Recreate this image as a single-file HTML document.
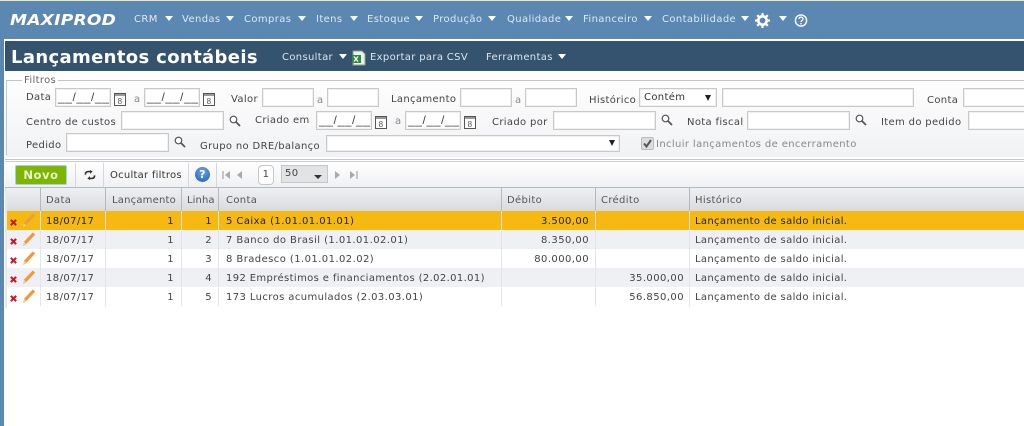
<!DOCTYPE html>
<html lang="pt"><head><meta charset="utf-8"><title>Lançamentos contábeis</title>
<style>
html,body{margin:0;padding:0;width:1024px;height:426px;overflow:hidden;background:#5b87b3}
body{position:relative;font-family:"DejaVu Sans","Liberation Sans",sans-serif;font-size:10px;color:#444;letter-spacing:.34px}
.a,.t,.i,.c,.mi,.d{position:absolute}
.t{white-space:nowrap;line-height:12px}
.mi{top:14px;color:#dfe8f1;white-space:nowrap;line-height:12px;font-size:10px;letter-spacing:.38px}
.d{width:0;height:0;border-left:4px solid transparent;border-right:4px solid transparent;border-top:5px solid #fff}
.i{box-sizing:border-box;height:19px;background:#fff;border:1px solid #c9c9c9;box-shadow:inset 0 0 0 1px #f0f0f0}
.date{font-family:"Liberation Sans",sans-serif;font-size:12px;color:#444;line-height:16px;padding-left:2px;letter-spacing:.6px;white-space:nowrap;width:56px}
.c{width:12px;height:14px}
.row{position:absolute;left:7px;width:1017px;height:19px}
.cell{position:absolute;top:1px;height:19px;line-height:19px;white-space:nowrap;color:#444}
.n{letter-spacing:.43px}
.h{position:absolute;top:193px;line-height:16px;color:#555}
.hs{position:absolute;top:188px;height:23px;width:1px;background:#b3b9c3}
.rs{position:absolute;top:211px;width:1px;height:95px;background:#e3e5e8}
</style></head><body>
<div class="a" style="left:0;top:0;width:1024px;height:1px;background:#f0e7b8"></div>
<div class="t" style="left:10px;top:11px;font:italic bold 15px/18px 'DejaVu Sans',sans-serif;color:#fff;letter-spacing:.2px;transform:scaleX(1.14);transform-origin:left">MAXIPROD</div>
<span class="mi" style="left:134px">CRM</span><i class="d" style="left:165px;top:16px"></i>
<span class="mi" style="left:182px">Vendas</span><i class="d" style="left:226px;top:16px"></i>
<span class="mi" style="left:244px">Compras</span><i class="d" style="left:298px;top:16px"></i>
<span class="mi" style="left:316px">Itens</span><i class="d" style="left:350px;top:16px"></i>
<span class="mi" style="left:367px">Estoque</span><i class="d" style="left:415px;top:16px"></i>
<span class="mi" style="left:433px">Produção</span><i class="d" style="left:488px;top:16px"></i>
<span class="mi" style="left:507px">Qualidade</span><i class="d" style="left:565px;top:16px"></i>
<span class="mi" style="left:583px">Financeiro</span><i class="d" style="left:644px;top:16px"></i>
<span class="mi" style="left:662px">Contabilidade</span><i class="d" style="left:741px;top:16px"></i>
<svg class="a" style="left:755px;top:13px" width="15" height="15" viewBox="0 0 15 15"><circle cx="7.5" cy="7.5" r="4.2" fill="none" stroke="#fff" stroke-width="2.6"/><path d="M7.5 0v3M7.5 12v3M0 7.5h3M12 7.5h3M2.2 2.2l2 2M10.8 10.8l2 2M12.8 2.2l-2 2M4.2 10.8l-2 2" stroke="#fff" stroke-width="2.2"/></svg>
<i class="d" style="left:779px;top:16px"></i>
<svg class="a" style="left:794px;top:13px" width="14" height="15" viewBox="0 0 14 15"><circle cx="7" cy="7.5" r="5.6" fill="none" stroke="#fff" stroke-width="1.4"/><path d="M5 6c0-2.5 4-2.5 4 0 0 1.500-2 1.500-2 3" fill="none" stroke="#fff" stroke-width="1.300"/><rect x="6.300" y="10" width="1.400" height="1.400" fill="#fff"/></svg>

<div class="a" style="left:4px;top:39px;width:1020px;height:387px;background:#fff"></div>
<div class="a" style="left:5px;top:41px;width:1019px;height:30px;background:#34536f"></div>
<div class="t" style="left:11px;top:48px;font:bold 18px/20px 'DejaVu Sans',sans-serif;color:#fff;letter-spacing:.35px">Lançamentos contábeis</div>
<span class="t" style="left:282px;top:52px;color:#dde5ec">Consultar</span><i class="d" style="left:339px;top:54px"></i>
<svg class="a" style="left:351px;top:50px" width="16" height="16" viewBox="0 0 16 16"><path d="M2 1h9l3 3v11H2z" fill="#eef2ee" stroke="#8d9a93"/><rect x="1" y="5" width="9" height="8" fill="#2f8a3c"/><path d="M3 6.500l4 5M7 6.500l-4 5" stroke="#fff" stroke-width="1.300"/></svg>
<span class="t" style="left:370px;top:52px;color:#dde5ec">Exportar para CSV</span>
<span class="t" style="left:486px;top:52px;color:#dde5ec">Ferramentas</span><i class="d" style="left:558px;top:54px"></i>

<div class="a" style="left:5px;top:71px;width:1019px;height:86px;background:linear-gradient(#fff,#f1f2f4)"></div>
<div class="a" style="left:6px;top:80px;width:1018px;height:75px;box-sizing:border-box;border:1px solid #c3c6cb;border-right:0;border-bottom:0"></div>
<div class="t" style="left:22px;top:75px;padding:0 2px;background:#fff;color:#666">Filtros</div>

<span class="t" style="left:26px;top:92px">Data</span>
<div class="i date" style="left:55px;top:88px">__/__/__</div>
<svg class="c" style="left:114px;top:92px" viewBox="0 0 12 14"><rect x=".5" y="1.500" width="11" height="12" fill="#fff" stroke="#555"/><rect x="1" y="2" width="10" height="2" fill="#999"/><text x="6" y="12" font-size="8" text-anchor="middle" fill="#555" font-family="Liberation Sans">8</text></svg>
<span class="t" style="left:134px;top:94px;color:#888">a</span>
<div class="i date" style="left:144px;top:88px">__/__/__</div>
<svg class="c" style="left:203px;top:92px" viewBox="0 0 12 14"><rect x=".5" y="1.500" width="11" height="12" fill="#fff" stroke="#555"/><rect x="1" y="2" width="10" height="2" fill="#999"/><text x="6" y="12" font-size="8" text-anchor="middle" fill="#555" font-family="Liberation Sans">8</text></svg>
<span class="t" style="left:231px;top:94px">Valor</span>
<div class="i" style="left:262px;top:88px;width:52px"></div>
<span class="t" style="left:317px;top:95px;color:#888">a</span>
<div class="i" style="left:327px;top:88px;width:52px"></div>
<span class="t" style="left:391px;top:94px">Lançamento</span>
<div class="i" style="left:460px;top:88px;width:52px"></div>
<span class="t" style="left:515px;top:95px;color:#888">a</span>
<div class="i" style="left:525px;top:88px;width:52px"></div>
<span class="t" style="left:589px;top:95px">Histórico</span>
<div class="i" style="left:639px;top:88px;width:78px;color:#333;line-height:17px;padding-left:4px;font-size:10px">Contém</div>
<div class="a" style="left:705px;top:95px;width:0;height:0;border-left:3.500px solid transparent;border-right:3.500px solid transparent;border-top:6px solid #222"></div>
<div class="i" style="left:722px;top:88px;width:192px"></div>
<span class="t" style="left:927px;top:95px">Conta</span>
<div class="i" style="left:963px;top:88px;width:70px"></div>

<span class="t" style="left:26px;top:117px">Centro de custos</span>
<div class="i" style="left:121px;top:111px;width:103px"></div>
<svg class="a" style="left:229px;top:115px" width="12" height="12" viewBox="0 0 12 12"><circle cx="4.500" cy="4.500" r="3.300" fill="#fff" stroke="#555" stroke-width="1.200"/><path d="M7 7l4 4" stroke="#555" stroke-width="1.800"/></svg>
<span class="t" style="left:255px;top:115px">Criado em</span>
<div class="i date" style="left:316px;top:111px">__/__/__</div>
<svg class="c" style="left:375px;top:115px" viewBox="0 0 12 14"><rect x=".5" y="1.500" width="11" height="12" fill="#fff" stroke="#555"/><rect x="1" y="2" width="10" height="2" fill="#999"/><text x="6" y="12" font-size="8" text-anchor="middle" fill="#555" font-family="Liberation Sans">8</text></svg>
<span class="t" style="left:395px;top:116px;color:#888">a</span>
<div class="i date" style="left:405px;top:111px">__/__/__</div>
<svg class="c" style="left:464px;top:115px" viewBox="0 0 12 14"><rect x=".5" y="1.500" width="11" height="12" fill="#fff" stroke="#555"/><rect x="1" y="2" width="10" height="2" fill="#999"/><text x="6" y="12" font-size="8" text-anchor="middle" fill="#555" font-family="Liberation Sans">8</text></svg>
<span class="t" style="left:492px;top:117px">Criado por</span>
<div class="i" style="left:553px;top:111px;width:103px"></div>
<svg class="a" style="left:661px;top:114px" width="12" height="12" viewBox="0 0 12 12"><circle cx="4.500" cy="4.500" r="3.300" fill="#fff" stroke="#555" stroke-width="1.200"/><path d="M7 7l4 4" stroke="#555" stroke-width="1.800"/></svg>
<span class="t" style="left:687px;top:117px">Nota fiscal</span>
<div class="i" style="left:747px;top:111px;width:103px"></div>
<svg class="a" style="left:855px;top:114px" width="12" height="12" viewBox="0 0 12 12"><circle cx="4.500" cy="4.500" r="3.300" fill="#fff" stroke="#555" stroke-width="1.200"/><path d="M7 7l4 4" stroke="#555" stroke-width="1.800"/></svg>
<span class="t" style="left:881px;top:117px">Item do pedido</span>
<div class="i" style="left:968px;top:111px;width:70px"></div>

<span class="t" style="left:26px;top:140px">Pedido</span>
<div class="i" style="left:66px;top:133px;width:103px"></div>
<svg class="a" style="left:174px;top:136px" width="12" height="12" viewBox="0 0 12 12"><circle cx="4.500" cy="4.500" r="3.300" fill="#fff" stroke="#555" stroke-width="1.200"/><path d="M7 7l4 4" stroke="#555" stroke-width="1.800"/></svg>
<span class="t" style="left:200px;top:141px">Grupo no DRE/balanço</span>
<div class="i" style="left:326px;top:135px;width:294px;height:17px"></div>
<div class="a" style="left:609px;top:140px;width:0;height:0;border-left:3.500px solid transparent;border-right:3.500px solid transparent;border-top:6px solid #222"></div>
<div class="a" style="left:641px;top:137px;width:11px;height:11px;background:#ddd;border:1px solid #bbb;border-radius:2px"></div>
<svg class="a" style="left:642px;top:138px" width="11" height="11" viewBox="0 0 11 11"><path d="M2 5.500l2.500 3L9 2" fill="none" stroke="#555" stroke-width="2"/></svg>
<span class="t" style="left:656px;top:139px;color:#888;letter-spacing:.37px">Incluir lançamentos de encerramento</span>

<div class="a" style="left:5px;top:159px;width:1019px;height:1px;background:#c3c6cb"></div>
<div class="a" style="left:5px;top:160px;width:1019px;height:2px;background:#fff"></div>
<div class="a" style="left:5px;top:162px;width:1019px;height:26px;background:linear-gradient(#fff,#eff0f2)"></div>
<div class="a" style="left:5px;top:161px;width:1019px;height:1px;background:#c9ccd2"></div>
<div class="a" style="left:15px;top:165px;width:52px;height:20px;box-sizing:border-box;background:#7db500;border:1px solid #a8cfe8;border-radius:2px;color:#eaf5cf;text-align:center;font:bold 11.5px/18px 'DejaVu Sans',sans-serif;letter-spacing:.6px">Novo</div>
<div class="a" style="left:75px;top:163px;width:1px;height:24px;background:#d5d7db"></div>
<svg class="a" style="left:83px;top:170px" width="14" height="10" viewBox="0 0 14 13"><path d="M1 6C1 3 3 2 5 2h3M13 7c0 3-2 4-4 4H6" fill="none" stroke="#333" stroke-width="2.200"/><path d="M7 0l3.500 2L7 5zM7 13l-3.500-2L7 8z" fill="#333"/></svg>
<div class="a" style="left:103px;top:163px;width:1px;height:24px;background:#d5d7db"></div>
<span class="t" style="left:110px;top:170px;color:#333;letter-spacing:.25px">Ocultar filtros</span>
<div class="a" style="left:188px;top:163px;width:1px;height:24px;background:#d5d7db"></div>
<div class="a" style="left:195px;top:167px;width:15px;height:15px;border-radius:50%;background:radial-gradient(circle at 50% 30%,#6aa3ea,#1e5fb5);color:#fff;text-align:center;font:bold 11px/15px 'DejaVu Sans',sans-serif">?</div>
<div class="a" style="left:216px;top:163px;width:1px;height:24px;background:#d5d7db"></div>
<svg class="a" style="left:222px;top:170px" width="30" height="10" viewBox="0 0 30 10"><path d="M1 1v8" stroke="#aaa" stroke-width="1.300"/><path d="M8 1v8L3 5zM20 1v8l-5-4z" fill="#aaa"/></svg>
<div class="a" style="left:258px;top:165px;width:16px;height:20px;box-sizing:border-box;background:#fff;border:1px solid #c6c6c6;border-radius:4px;text-align:center;line-height:18px;color:#444">1</div>
<div class="a" style="left:281px;top:165px;width:47px;height:18px;box-sizing:border-box;background:#e2e3e5;border:1px solid #c6c6c6;line-height:16px;padding-left:3px;color:#444">50</div>
<div class="a" style="left:314px;top:175px;width:0;height:0;border-left:4.500px solid transparent;border-right:4.500px solid transparent;border-top:4px solid #333"></div>
<svg class="a" style="left:334px;top:170px" width="26" height="10" viewBox="0 0 26 10"><path d="M1 1v8l5-4zM16 1v8l5-4z" fill="#aaa"/><path d="M23 1v8" stroke="#aaa" stroke-width="1.300"/></svg>

<div class="a" style="left:5px;top:187px;width:1019px;height:1px;background:#b3b9c3"></div>
<div class="a" style="left:7px;top:188px;width:1017px;height:23px;background:linear-gradient(#eff0f2,#d8dade)"></div>
<div class="a" style="left:5px;top:188px;width:2px;height:120px;background:#e6e8eb"></div>
<div class="hs" style="left:40px"></div><div class="hs" style="left:105px"></div><div class="hs" style="left:181px"></div><div class="hs" style="left:218px"></div><div class="hs" style="left:501px"></div><div class="hs" style="left:595px"></div><div class="hs" style="left:689px"></div>
<span class="h" style="left:46px">Data</span><span class="h" style="left:112px;letter-spacing:.2px">Lançamento</span><span class="h" style="left:187px;letter-spacing:.1px">Linha</span><span class="h" style="left:226px">Conta</span><span class="h" style="left:507px">Débito</span><span class="h" style="left:601px">Crédito</span><span class="h" style="left:695px">Histórico</span>

<div class="row" style="top:211px;background:#f5b912">
<div class="cell n" style="left:39px;color:#222">18/07/17</div><div class="cell" style="left:87px;width:80px;text-align:right;color:#222">1</div><div class="cell" style="left:165px;width:40px;text-align:right;color:#222">1</div><div class="cell n" style="left:219px;color:#222">5 Caixa (1.01.01.01.01)</div><div class="cell n" style="left:482px;width:100px;text-align:right;color:#222">3.500,00</div><div class="cell" style="left:688px;color:#222">Lançamento de saldo inicial.</div></div>
<div class="row" style="top:230px;background:#eff0f3">
<div class="cell n" style="left:39px">18/07/17</div><div class="cell" style="left:87px;width:80px;text-align:right">1</div><div class="cell" style="left:165px;width:40px;text-align:right">2</div><div class="cell n" style="left:219px">7 Banco do Brasil (1.01.01.02.01)</div><div class="cell n" style="left:482px;width:100px;text-align:right">8.350,00</div><div class="cell" style="left:688px">Lançamento de saldo inicial.</div></div>
<div class="row" style="top:249px;background:#fff">
<div class="cell n" style="left:39px">18/07/17</div><div class="cell" style="left:87px;width:80px;text-align:right">1</div><div class="cell" style="left:165px;width:40px;text-align:right">3</div><div class="cell n" style="left:219px">8 Bradesco (1.01.01.02.02)</div><div class="cell n" style="left:482px;width:100px;text-align:right">80.000,00</div><div class="cell" style="left:688px">Lançamento de saldo inicial.</div></div>
<div class="row" style="top:268px;background:#eff0f3">
<div class="cell n" style="left:39px">18/07/17</div><div class="cell" style="left:87px;width:80px;text-align:right">1</div><div class="cell" style="left:165px;width:40px;text-align:right">4</div><div class="cell" style="left:219px;letter-spacing:.37px">192 Empréstimos e financiamentos (2.02.01.01)</div><div class="cell n" style="left:577px;width:100px;text-align:right">35.000,00</div><div class="cell" style="left:688px">Lançamento de saldo inicial.</div></div>
<div class="row" style="top:287px;background:#fff">
<div class="cell n" style="left:39px">18/07/17</div><div class="cell" style="left:87px;width:80px;text-align:right">1</div><div class="cell" style="left:165px;width:40px;text-align:right">5</div><div class="cell" style="left:219px;letter-spacing:.4px">173 Lucros acumulados (2.03.03.01)</div><div class="cell n" style="left:577px;width:100px;text-align:right">56.850,00</div><div class="cell" style="left:688px">Lançamento de saldo inicial.</div></div>

<div class="rs" style="left:40px"></div><div class="rs" style="left:105px"></div><div class="rs" style="left:181px"></div><div class="rs" style="left:218px"></div><div class="rs" style="left:501px"></div><div class="rs" style="left:595px"></div><div class="rs" style="left:689px"></div>

<svg class="a" style="left:10px;top:219px" width="7" height="7" viewBox="0 0 8 8"><path d="M1 1l6 6M7 1L1 7" stroke="#c8182a" stroke-width="2.400"/></svg>
<svg class="a" style="left:22px;top:213px" width="14" height="15" viewBox="0 0 14 15"><path d="M12 1.500L3 11" stroke="#e8a040" stroke-width="3.200"/><path d="M1 14l.8-3.500 2.500 2.300z" fill="#e8c9a0"/></svg>
<svg class="a" style="left:10px;top:238px" width="7" height="7" viewBox="0 0 8 8"><path d="M1 1l6 6M7 1L1 7" stroke="#c8182a" stroke-width="2.400"/></svg>
<svg class="a" style="left:22px;top:232px" width="14" height="15" viewBox="0 0 14 15"><path d="M12 1.500L3 11" stroke="#ef9a36" stroke-width="3.200"/><path d="M1 14l.8-3.500 2.500 2.300z" fill="#e8c9a0"/></svg>
<svg class="a" style="left:10px;top:257px" width="7" height="7" viewBox="0 0 8 8"><path d="M1 1l6 6M7 1L1 7" stroke="#c8182a" stroke-width="2.400"/></svg>
<svg class="a" style="left:22px;top:251px" width="14" height="15" viewBox="0 0 14 15"><path d="M12 1.500L3 11" stroke="#ef9a36" stroke-width="3.200"/><path d="M1 14l.8-3.500 2.500 2.300z" fill="#e8c9a0"/></svg>
<svg class="a" style="left:10px;top:276px" width="7" height="7" viewBox="0 0 8 8"><path d="M1 1l6 6M7 1L1 7" stroke="#c8182a" stroke-width="2.400"/></svg>
<svg class="a" style="left:22px;top:270px" width="14" height="15" viewBox="0 0 14 15"><path d="M12 1.500L3 11" stroke="#ef9a36" stroke-width="3.200"/><path d="M1 14l.8-3.500 2.500 2.300z" fill="#e8c9a0"/></svg>
<svg class="a" style="left:10px;top:295px" width="7" height="7" viewBox="0 0 8 8"><path d="M1 1l6 6M7 1L1 7" stroke="#c8182a" stroke-width="2.400"/></svg>
<svg class="a" style="left:22px;top:289px" width="14" height="15" viewBox="0 0 14 15"><path d="M12 1.500L3 11" stroke="#ef9a36" stroke-width="3.200"/><path d="M1 14l.8-3.500 2.500 2.300z" fill="#e8c9a0"/></svg>
</body></html>
